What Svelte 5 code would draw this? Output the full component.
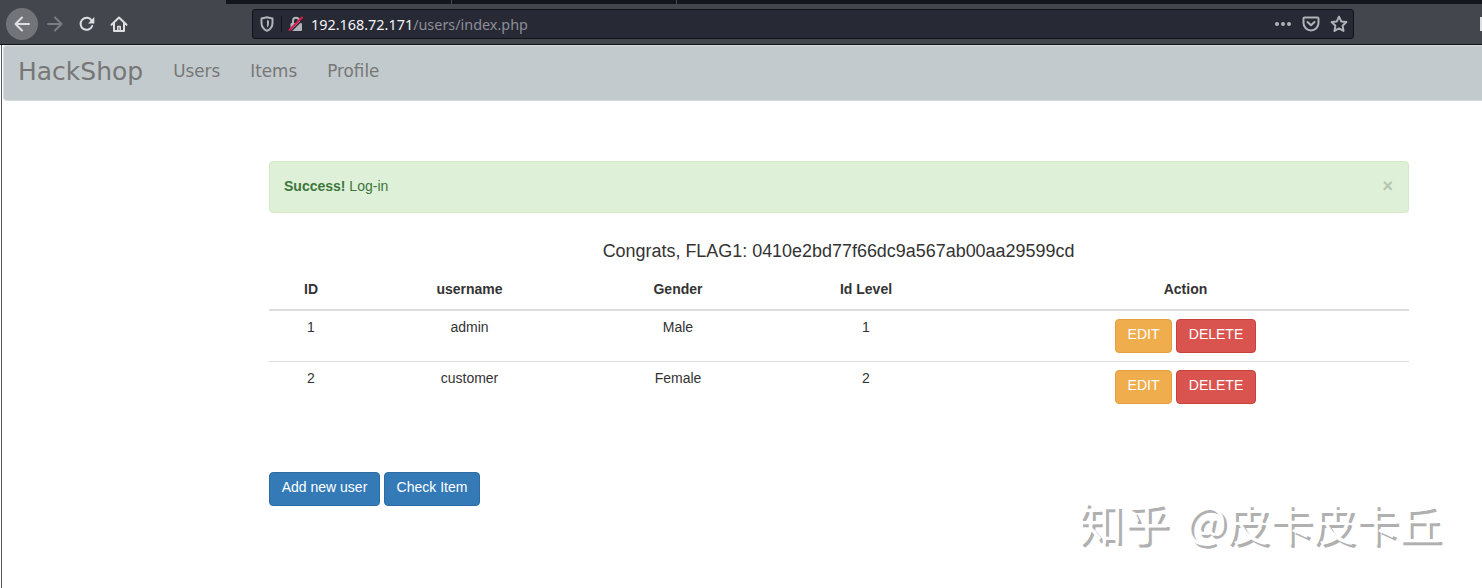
<script>
  const links = ["Users", "Items", "Profile"];
  const columns = [
    { label: "ID", width: 84 },
    { label: "username", width: 233 },
    { label: "Gender", width: 184 },
    { label: "Id Level", width: 192 },
    { label: "Action", width: 447 },
  ];
  const users = [
    { id: 1, username: "admin", gender: "Male", level: 1 },
    { id: 2, username: "customer", gender: "Female", level: 2 },
  ];
</script>

<div class="window">
  <div class="tabs"><i></i><i></i><i></i></div>
  <div class="toolbar">
    <div class="controls">
      <span class="back">
        <svg width="16" height="16" viewBox="0 0 16 16"><path d="M15 8H1.5M8 1.5 1.5 8 8 14.5" /></svg>
      </span>
      <svg class="forward" width="16" height="16" viewBox="0 0 16 16"><path d="M1 8h13.5M8 1.5 14.5 8 8 14.5" /></svg>
      <svg class="reload" width="16" height="16" viewBox="0 0 16 16">
        <path d="M13.2 10A6 6 0 1 1 12.5 4.3" /><path class="solid" d="M15.3 1v6.5H9z" />
      </svg>
      <svg class="home" width="18" height="17" viewBox="0 0 18 17">
        <path d="M1.5 8.7 9 1.5l7.5 7.2M4 7.5V15h10V7.5" /><path class="door" d="M7.8 15v-4.4h2.4V15" />
      </svg>
    </div>
    <div class="urlbar">
      <svg class="shield" width="14" height="16" viewBox="0 0 14 16">
        <path d="M7 1.2 12.5 2.5V7c0 4-2.3 6.4-5.5 7.8C3.8 13.4 1.5 11 1.5 7V2.5z" />
        <path class="solid" d="M7 4l2 .8V7c0 2.2-.6 3.6-2 4.8z" />
      </svg>
      <svg class="lock" width="16" height="16" viewBox="0 0 16 16">
        <path d="M5 8V4.7a3 3 0 0 1 6 0V8" /><rect x="2.5" y="7" width="11.5" height="8" rx="1" />
        <path class="gap" d="M2.5 15.5 15.5 3" /><path class="slash" d="M1.5 14 14 1.5" />
      </svg>
      <span class="url"><b>192.168.72.171</b>/users/index.php</span>
      <svg class="dots" width="18" height="6" viewBox="0 0 18 6">
        <circle cx="3" cy="3" r="2" /><circle cx="9" cy="3" r="2" /><circle cx="15" cy="3" r="2" />
      </svg>
      <svg class="pocket" width="18" height="16" viewBox="0 0 18 16">
        <path d="M2.5 1.5h13q1 0 1 1v4.5a7.5 7.5 0 0 1-15 0V2.5q0-1 1-1zM5.5 6 9 9.3 12.5 6" />
      </svg>
      <svg class="star" width="18" height="18" viewBox="0 0 18 18">
        <path d="m9 1.7 2.2 4.7 5.2.7-3.8 3.6.9 5.2L9 13.4l-4.5 2.5.9-5.2L1.6 7.1l5.2-.7z" />
      </svg>
    </div>
    <i class="library"></i>
  </div>

  <div class="page">
    <nav>
      <a class="brand" href="#top">HackShop</a>
      {#each links as link}
        <a href="#top">{link}</a>
      {/each}
    </nav>

    <main>
      <div class="alert">
        <span><strong>Success!</strong> Log-in</span>
        <span class="close">×</span>
      </div>

      <h4>Congrats, FLAG1: 0410e2bd77f66dc9a567ab00aa29599cd</h4>

      <table>
        <colgroup>
          {#each columns as column}
            <col style:width="{column.width}px" />
          {/each}
        </colgroup>
        <thead>
          <tr>
            {#each columns as column}
              <th>{column.label}</th>
            {/each}
          </tr>
        </thead>
        <tbody>
          {#each users as user}
            <tr>
              <td>{user.id}</td>
              <td>{user.username}</td>
              <td>{user.gender}</td>
              <td>{user.level}</td>
              <td class="actions">
                <div class="buttons center">
                  <button class="warning">EDIT</button>
                  <button class="danger">DELETE</button>
                </div>
              </td>
            </tr>
          {/each}
        </tbody>
      </table>

      <div class="buttons footer">
        <button class="primary add">Add new user</button>
        <button class="primary check">Check Item</button>
      </div>
    </main>
  </div>
  <div class="watermark"><span class="site">知乎</span> <span class="at">@</span>皮卡皮卡丘</div>
</div>

<style>
  :global(body) {
    margin: 0;
    background: #fff;
  }
  .window {
    position: relative;
    box-sizing: border-box;
    width: 1482px;
    height: 588px;
    overflow: hidden;
    font: 14px/20px "Liberation Sans", Arial, sans-serif;
    color: #333;
  }
  .tabs {
    display: flex;
    height: 4px;
    padding-left: 226px;
    background: linear-gradient(to right, #43464d 226px, #13161c 226px);
  }
  .tabs i {
    box-sizing: border-box;
    width: 225px;
    border-right: 1px solid #4b4e55;
  }
  .tabs i:first-child {
    width: 226px;
  }
  .tabs i:last-child {
    border: 0;
  }
  .toolbar {
    box-sizing: border-box;
    display: flex;
    align-items: center;
    height: 41px;
    padding-left: 6px;
    border-bottom: 1px solid #0e1116;
    background: #43464d;
  }
  svg {
    display: block;
    flex: none;
    fill: none;
    stroke: #dedfe1;
    stroke-width: 2;
    stroke-linejoin: round;
    stroke-linecap: round;
  }
  svg .solid {
    fill: #dedfe1;
    stroke: none;
  }
  .controls {
    display: flex;
    align-items: center;
    width: 246px;
  }
  .back {
    display: grid;
    place-items: center;
    width: 32px;
    height: 32px;
    border-radius: 50%;
    background: #72747a;
  }
  .forward {
    margin-left: 9px;
    stroke: #7b7d82;
  }
  .reload {
    margin-left: 16px;
  }
  .home {
    margin-left: 15px;
  }
  .home .door {
    stroke-width: 1.5;
  }
  .urlbar {
    box-sizing: border-box;
    display: flex;
    align-items: center;
    width: 1102px;
    height: 30px;
    padding: 0 5px 0 7px;
    border: 1px solid #11131a;
    border-radius: 3px;
    background: #272935;
  }
  .urlbar svg {
    stroke: #b2b3b8;
  }
  .urlbar svg .solid {
    fill: #b2b3b8;
  }
  .shield {
    padding-right: 7px;
    border-right: 1px solid #11131a;
  }
  .lock {
    margin-left: 6px;
  }
  .lock rect {
    fill: #b2b3b8;
    stroke: none;
  }
  .urlbar .lock .gap {
    stroke: #272935;
    stroke-width: 1.5;
  }
  .urlbar .lock .slash {
    stroke: #df1b4b;
  }
  .url {
    flex: 1;
    margin-left: 7px;
    padding-top: 2px;
    font: 14.4px/20px "Noto Sans", sans-serif;
    color: #8d8e95;
  }
  .url b {
    font-weight: 400;
    color: #f4f4f6;
  }
  .urlbar .dots {
    fill: #b2b3b8;
    stroke: none;
  }
  .pocket {
    margin: 0 10px;
  }
  .library {
    width: 2px;
    height: 14px;
    margin-left: auto;
    background: #dedfe1;
  }
  .page {
    box-sizing: border-box;
    height: 543px;
    margin-left: 1px;
    padding-left: 1px;
    border-left: 1px solid #55585e;
  }
  nav {
    box-sizing: border-box;
    display: flex;
    height: 56px;
    padding-left: 14px;
    border: 1px solid #d6dbde;
    border-width: 1px 0 1px 1px;
    border-radius: 4px 0 0 4px;
    background: #c3cacd;
    font: 16.8px/20px "DejaVu Sans", sans-serif;
  }
  nav a {
    padding: 15px 15px 0;
    color: #777;
    text-decoration: none;
  }
  nav .brand {
    padding: 16px 15px 0 0;
    font-size: 25px;
  }
  main {
    width: 1140px;
    margin: 60px 0 0 266px;
  }
  .alert {
    box-sizing: border-box;
    display: flex;
    justify-content: space-between;
    height: 52px;
    padding: 14px 15px 14px 14px;
    border: 1px solid #d6e9c6;
    border-radius: 4px;
    background: #dff0d8;
    color: #3c763d;
  }
  .close {
    font: bold 18px/20px "Liberation Sans", Arial, sans-serif;
    color: #b5c6b0;
  }
  h4 {
    margin: 28px 1px 10px 0;
    font-size: 17.95px;
    font-weight: 400;
    line-height: 20px;
    text-align: center;
  }
  table {
    width: 100%;
    border-collapse: collapse;
    table-layout: fixed;
  }
  th,
  td {
    box-sizing: border-box;
    padding: 8px;
    text-align: center;
    vertical-align: top;
  }
  th {
    height: 39px;
    border-bottom: 2px solid #ddd;
  }
  td {
    height: 51px;
    padding-top: 6px;
    border-top: 1px solid #ddd;
  }
  .actions {
    padding-top: 8px;
  }
  .buttons {
    display: flex;
    gap: 4px;
  }
  .center {
    justify-content: center;
  }
  .footer {
    margin-top: 59px;
  }
  button {
    box-sizing: border-box;
    height: 34px;
    padding: 4px 11px 8px;
    border: 1px solid;
    border-radius: 4px;
    font: inherit;
    color: #fff;
    white-space: nowrap;
  }
  .warning {
    width: 57px;
    border-color: #e39f3e;
    background: #f0ad4e;
  }
  .danger {
    width: 80px;
    border-color: #c9413d;
    background: #d9534f;
  }
  .primary {
    border-color: #2e6da4;
    background: #337ab7;
  }
  .add {
    width: 111px;
  }
  .check {
    width: 96px;
  }
  .watermark {
    position: absolute;
    left: 1078px;
    top: 491px;
    font: 43px/62px "Noto Sans CJK SC", sans-serif;
    color: #fff;
    text-shadow: 3px 3px 0 #b0b0b0;
    white-space: nowrap;
  }
  .watermark .site {
    margin-right: 6px;
    font-size: 45px;
    letter-spacing: 1px;
  }
  .watermark .at {
    position: relative;
    top: -3px;
  }
</style>
